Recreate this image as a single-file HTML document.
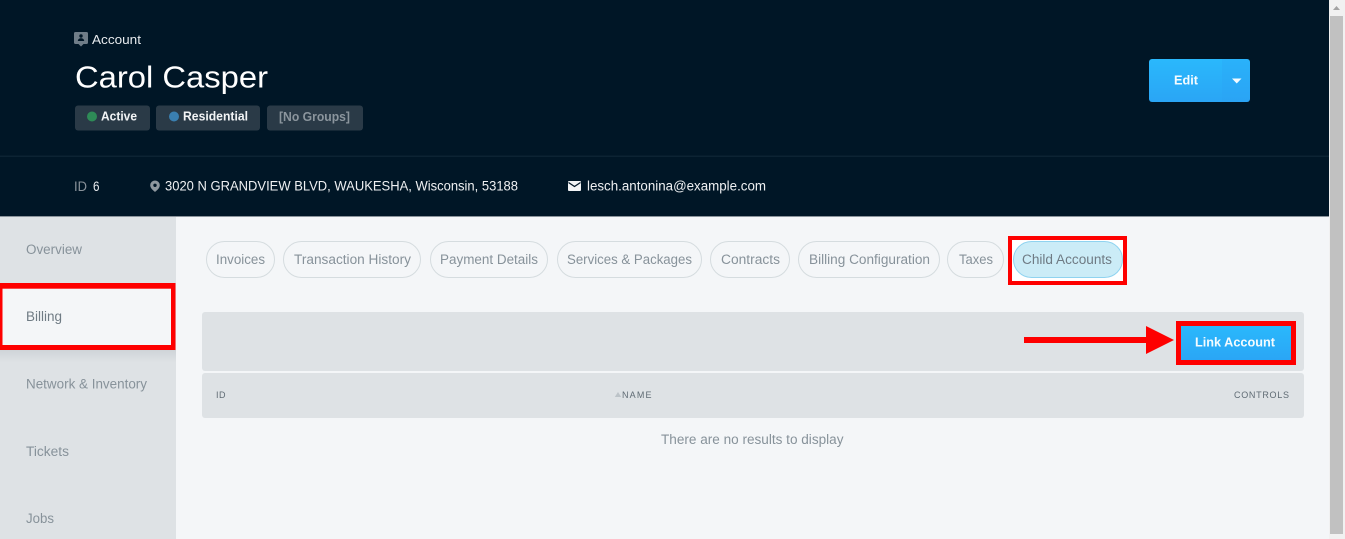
<!DOCTYPE html>
<html><head><meta charset="utf-8"><title>Carol Casper</title>
<style>
html,body{margin:0;padding:0;width:1345px;height:539px;overflow:hidden;background:#f4f6f8}
svg{display:block;position:absolute;left:0;top:0;filter:blur(.3px)}
text{font-family:"Liberation Sans",sans-serif}
</style></head><body>
<svg width="1345" height="539" viewBox="0 0 1345 539" xmlns="http://www.w3.org/2000/svg">
<defs>
<linearGradient id="b" x1="0" y1="0" x2="0" y2="1"><stop offset="0" stop-color="#2ab8fc"/><stop offset="1" stop-color="#2aa5f5"/></linearGradient>
<linearGradient id="s" x1="0" y1="0" x2="0" y2="1"><stop offset="0" stop-color="#cfd4d8"/><stop offset="1" stop-color="#dee2e5"/></linearGradient>
</defs>
<rect width="1345" height="539" fill="#f4f6f8"/>
<!-- header -->
<rect width="1329" height="216" fill="#001626"/>
<rect y="155.500" width="1329" height="1.500" fill="#0c2333"/>
<rect y="216" width="1329" height="1" fill="#8a939b"/>
<path d="M75.500 32h11a1.500 1.500 0 0 1 1.500 1.500v9a1.500 1.500 0 0 1-1.500 1.500h-3l-2.500 2.500-2.500-2.500h-3a1.500 1.500 0 0 1-1.500-1.500v-9a1.500 1.500 0 0 1 1.500-1.500z" fill="#6f7d88"/>
<circle cx="81" cy="36" r="1.700" fill="#001626"/><path d="M77.800 41c.3-2 1.500-2.700 3.200-2.700s2.900.7 3.200 2.700z" fill="#001626"/>
<text x="92" y="44" font-size="13" fill="#e6eaed" textLength="49" lengthAdjust="spacingAndGlyphs">Account</text>
<text x="75" y="87.500" font-size="31" fill="#fff" textLength="193" lengthAdjust="spacingAndGlyphs">Carol Casper</text>
<rect x="75" y="105.500" width="75" height="25" rx="3" fill="#2a3a47"/>
<rect x="156" y="105.500" width="104" height="25" rx="3" fill="#2a3a47"/>
<rect x="267" y="105.500" width="96" height="25" rx="3" fill="#2a3a47"/>
<circle cx="92" cy="116.500" r="5" fill="#2e8b57"/>
<circle cx="174" cy="116.500" r="5" fill="#3a7fb0"/>
<text x="101" y="120.500" font-size="12.500" font-weight="700" fill="#f2f4f6" textLength="36" lengthAdjust="spacingAndGlyphs">Active</text>
<text x="183" y="120.500" font-size="12.500" font-weight="700" fill="#f2f4f6" textLength="65" lengthAdjust="spacingAndGlyphs">Residential</text>
<text x="279" y="121" font-size="12.500" font-weight="700" fill="#8b959d" textLength="71" lengthAdjust="spacingAndGlyphs">[No Groups]</text>
<text x="74" y="191" font-size="13.500" fill="#8a939b" textLength="13" lengthAdjust="spacingAndGlyphs">ID</text>
<text x="93" y="191" font-size="13.500" fill="#e8ebee" textLength="6.500" lengthAdjust="spacingAndGlyphs">6</text>
<path d="M155 180.500a4.800 4.800 0 0 1 4.800 4.800c0 3-3.200 5.300-4.800 6.700-1.600-1.400-4.800-3.700-4.800-6.700a4.800 4.800 0 0 1 4.800-4.800z" fill="#8f989f"/><circle cx="155" cy="185.300" r="1.700" fill="#001626"/>
<text x="165" y="190.500" font-size="13.500" fill="#eef0f2" textLength="353" lengthAdjust="spacingAndGlyphs">3020 N GRANDVIEW BLVD, WAUKESHA, Wisconsin, 53188</text>
<rect x="568" y="181" width="13" height="10" rx="1" fill="#f2f4f6"/><path d="M568.500 182.500l6 4 6-4" fill="none" stroke="#001626" stroke-width="1.300"/>
<text x="587" y="190.500" font-size="13.500" fill="#eef0f2" textLength="179" lengthAdjust="spacingAndGlyphs">lesch.antonina@example.com</text>
<!-- edit -->
<rect x="1149" y="59" width="101" height="43" rx="3" fill="url(#b)"/>
<path d="M1222 59h25a3 3 0 0 1 3 3v37a3 3 0 0 1-3 3h-25z" fill="#2a9ff2" fill-opacity=".25"/>
<text x="1174" y="84.500" font-size="13" font-weight="700" fill="#f4fbff" textLength="24" lengthAdjust="spacingAndGlyphs">Edit</text>
<path d="M1232 78.500h9.500l-4.750 5z" fill="#f4fbff"/>
<!-- sidebar -->
<rect y="217" width="176" height="322" fill="#dee2e5"/>
<rect x="0" y="350" width="176" height="12" fill="url(#s)"/>
<rect x="0" y="283" width="175.500" height="67" fill="#fe0000"/>
<rect x="2.500" y="288.700" width="168.500" height="56.300" fill="#f4f6f8"/>
<text x="26" y="254" font-size="13.500" fill="#87929a" textLength="56" lengthAdjust="spacingAndGlyphs">Overview</text>
<text x="26" y="321" font-size="13.500" fill="#6f7b84" textLength="36" lengthAdjust="spacingAndGlyphs">Billing</text>
<text x="26" y="388.500" font-size="13.500" fill="#87929a" textLength="121" lengthAdjust="spacingAndGlyphs">Network &amp; Inventory</text>
<text x="26" y="456" font-size="13.500" fill="#87929a" textLength="43" lengthAdjust="spacingAndGlyphs">Tickets</text>
<text x="26" y="523" font-size="13.500" fill="#87929a" textLength="28" lengthAdjust="spacingAndGlyphs">Jobs</text>
<!-- tabs -->
<g fill="none" stroke="#d5dcdf" stroke-width="1">
<rect x="206.500" y="241.500" width="68" height="36" rx="18"/>
<rect x="283.500" y="241.500" width="137" height="36" rx="18"/>
<rect x="430.500" y="241.500" width="117" height="36" rx="18"/>
<rect x="557.500" y="241.500" width="144" height="36" rx="18"/>
<rect x="710.500" y="241.500" width="79" height="36" rx="18"/>
<rect x="798.500" y="241.500" width="141" height="36" rx="18"/>
<rect x="947.500" y="241.500" width="56" height="36" rx="18"/>
</g>
<rect x="1010" y="238" width="115" height="45" fill="#fff"/>
<rect x="1013.500" y="241.500" width="109" height="36" rx="18" fill="#cbecf7" stroke="#8fd3f0"/>
<rect x="1010" y="238" width="115" height="45" fill="none" stroke="#fe0000" stroke-width="4"/>
<g font-size="13.500" fill="#87929a">
<text x="216" y="264" textLength="49" lengthAdjust="spacingAndGlyphs">Invoices</text>
<text x="294" y="264" textLength="117" lengthAdjust="spacingAndGlyphs">Transaction History</text>
<text x="440" y="264" textLength="98" lengthAdjust="spacingAndGlyphs">Payment Details</text>
<text x="567" y="264" textLength="125" lengthAdjust="spacingAndGlyphs">Services &amp; Packages</text>
<text x="721" y="264" textLength="59" lengthAdjust="spacingAndGlyphs">Contracts</text>
<text x="809" y="264" textLength="121" lengthAdjust="spacingAndGlyphs">Billing Configuration</text>
<text x="959" y="264" textLength="34" lengthAdjust="spacingAndGlyphs">Taxes</text>
<text x="1022" y="264" textLength="90" lengthAdjust="spacingAndGlyphs" fill="#6f7b84">Child Accounts</text>
</g>
<!-- toolbar and table -->
<rect x="202" y="312" width="1102" height="59" rx="3" fill="#dee2e5"/>
<rect x="202" y="373" width="1102" height="45" rx="3" fill="#dee2e5"/>
<rect x="1024" y="337" width="124" height="6" fill="#fe0000"/>
<path d="M1146 326l28 14-28 14z" fill="#fe0000"/>
<rect x="1180" y="326" width="112" height="35" fill="url(#b)"/>
<rect x="1178.500" y="323.500" width="115" height="39" fill="none" stroke="#fe0000" stroke-width="5"/>
<text x="1195" y="346.500" font-size="13" font-weight="700" fill="#f4fbff" textLength="80" lengthAdjust="spacingAndGlyphs">Link Account</text>
<g font-size="9" fill="#5f6b74">
<text x="216" y="398" textLength="9.500">ID</text>
<text x="622" y="398" textLength="29.500">NAME</text>
<text x="1234" y="398" textLength="55">CONTROLS</text>
</g>
<path d="M618 392l3.200 5h-6.400z" fill="#bcc3c8"/>
<text x="661" y="444" font-size="13.500" fill="#87929a" textLength="182.500" lengthAdjust="spacingAndGlyphs">There are no results to display</text>
<!-- scrollbar -->
<rect x="1329" width="16" height="539" fill="#f1f1f1"/>
<rect x="1330" y="16" width="13" height="518" fill="#c1c1c1"/>
<path d="M1336.500 6l3.500 4h-7z" fill="#a3a3a3"/>
</svg>
</body></html>
